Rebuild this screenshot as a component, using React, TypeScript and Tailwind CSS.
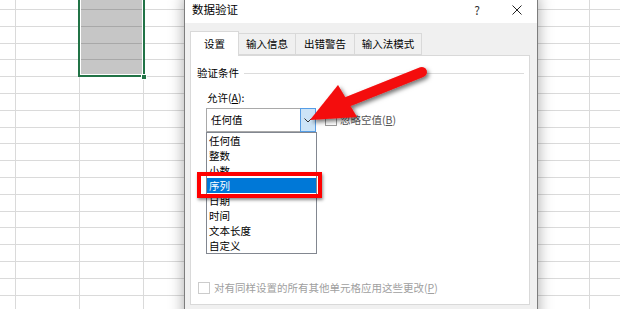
const rowLines = Array.from({ length: 20 }, (_, k) => Math.round(9 + 16.8 * k));
const rowHeights = rowLines.map((y, k) => (k === 0 ? y + 1 : y - rowLines[k - 1]));
const colLines = Array.from({ length: 11 }, (_, k) => Math.round(15 + 63.8 * k));
const colWidths = colLines.map((x, k) => (k === 0 ? x + 1 : x - colLines[k - 1]));

const listItems = ['任何值', '整数', '小数', '序列', '日期', '时间', '文本长度', '自定义'];

function Sheet() {
  return (
    <div className="flex flex-col">
      {rowHeights.map((h, r) => (
        <div key={r} className="flex" style={{ height: h }}>
          {colWidths.map((w, c) => {
            const selected = c === 2 && r <= 4;
            return (
              <div
                key={c}
                style={{ width: w }}
                className={
                  selected
                    ? 'shrink-0 border-r border-b border-[#a8a8a8] bg-[#c6c6c6]'
                    : 'shrink-0 border-r border-b border-[#dadada] bg-white'
                }
              />
            );
          })}
        </div>
      ))}
    </div>
  );
}

function Checkbox({ disabled }: { disabled?: boolean }) {
  return (
    <span
      className={`inline-block h-[12px] w-[12px] shrink-0 border bg-white ${
        disabled ? 'border-[#cccccc]' : 'border-[#9a9a9a]'
      }`}
    />
  );
}

function Dialog() {
  return (
    <div className="absolute left-[184px] top-[-4px] w-[354px] h-[330px] border-x border-[#7d7d7d] bg-[#f0f0f0] shadow-[0_0_14px_rgba(0,0,0,0.35)]">
      {/* title bar */}
      <div className="flex h-[27px] items-center bg-white pl-[7px] pr-[10px]">
        <span className="text-[11.5px] text-black">数据验证</span>
        <span className="ml-auto mr-[32px] text-[12px] text-[#333]">?</span>
        <svg width="10" height="10" viewBox="0 0 10 10" className="mr-[5px]">
          <path d="M0.5 0.5 L9.5 9.5 M9.5 0.5 L0.5 9.5" stroke="#222" strokeWidth="1" />
        </svg>
      </div>

      {/* body */}
      <div className="px-[5px] pt-[8px]">
        <div className="flex items-end text-[10.5px] text-black">
          <div className="relative z-10 -mb-px flex h-[25px] w-[49px] items-center justify-center border border-b-0 border-[#d9d9d9] bg-white">
            设置
          </div>
          <div className="flex h-[22px] w-[57px] items-center justify-center border border-l-0 border-[#d9d9d9] bg-[#f0f0f0]">
            输入信息
          </div>
          <div className="flex h-[22px] w-[59px] items-center justify-center border border-l-0 border-[#d9d9d9] bg-[#f0f0f0]">
            出错警告
          </div>
          <div className="flex h-[22px] w-[67px] items-center justify-center border border-l-0 border-[#d9d9d9] bg-[#f0f0f0]">
            输入法模式
          </div>
        </div>

        <div className="flex h-[250px] w-[340px] flex-col border border-[#d9d9d9] bg-white text-[10.5px] text-black">
          <div className="mt-[8px] flex h-[18px] items-center pl-[6px] pr-[5px]">
            <span>验证条件</span>
            <span className="ml-[5px] h-px flex-1 bg-[#dcdcdc]" />
          </div>

          <div className="mt-[7px] flex h-[18px] items-center pl-[16px]">
            允许(<span className="underline">A</span>):
          </div>

          <div className="mt-px flex items-center pl-[15px]">
            <div className="relative">
              <div className="flex h-[24px] w-[110px] items-center border border-[#a9a9a9] bg-white">
                <span className="pl-[4px]">任何值</span>
                <div className="ml-auto flex h-[24px] w-[16px] -mr-px items-center justify-center border border-[#569de5] bg-[#cce4f7]">
                  <svg width="8" height="5" viewBox="0 0 8 5">
                    <path d="M0.5 0.5 L4 4 L7.5 0.5" fill="none" stroke="#333" strokeWidth="1" />
                  </svg>
                </div>
              </div>
              {/* dropdown list */}
              <div className="absolute left-0 top-full z-20 w-[111px] border border-[#828790] bg-white">
                {listItems.map((t) => (
                  <div
                    key={t}
                    className={`flex h-[15px] items-center pl-[2px] ${
                      t === '序列' ? 'bg-[#0078d7] text-white' : 'text-black'
                    }`}
                  >
                    {t}
                  </div>
                ))}
              </div>
            </div>
            <div className="ml-[9px] flex items-center gap-[3px] text-[#555]">
              <Checkbox />
              <span>
                忽略空值(<span className="underline">B</span>)
              </span>
            </div>
          </div>

          <div className="mt-auto mb-[7px] flex h-[18px] items-center gap-[4px] pl-[7px] text-[#a0a0a0]">
            <Checkbox disabled />
            <span>
              对有同样设置的所有其他单元格应用这些更改(<span className="underline">P</span>)
            </span>
          </div>
        </div>
      </div>
    </div>
  );
}

export default function App() {
  return (
    <div className="relative h-[309px] w-[620px] overflow-hidden bg-white font-['Noto_Sans_CJK_SC','Microsoft_YaHei',sans-serif]">
      <Sheet />

      {/* selection */}
      <div className="absolute left-[78px] top-[-3px] h-[80px] w-[67px] border-2 border-[#217346]">
        <div className="h-full w-full border border-white" />
      </div>
      <div className="absolute left-[141px] top-[74px] h-[6px] w-[6px] border border-white bg-[#217346]" />

      <Dialog />

      {/* red highlight box */}
      <div className="absolute left-[197px] top-[172px] z-30 h-[26px] w-[125px] border-4 border-[#ff0000] shadow-[1px_2px_3px_rgba(0,0,0,0.45)]" />

      {/* red arrow */}
      <svg className="pointer-events-none absolute left-0 top-0 z-30" width="620" height="309" viewBox="0 0 620 309">
        <defs>
          <filter id="arrowShadow" x="-20%" y="-20%" width="140%" height="140%">
            <feDropShadow dx="2" dy="2.5" stdDeviation="2" floodColor="#000" floodOpacity="0.55" />
          </filter>
        </defs>
        <g filter="url(#arrowShadow)">
          <line x1="342" y1="104" x2="422" y2="72" stroke="#f40a0a" strokeWidth="10" strokeLinecap="round" />
          <polygon points="310,120 338,85 357,117" fill="#f40a0a" />
        </g>
      </svg>
    </div>
  );
}
